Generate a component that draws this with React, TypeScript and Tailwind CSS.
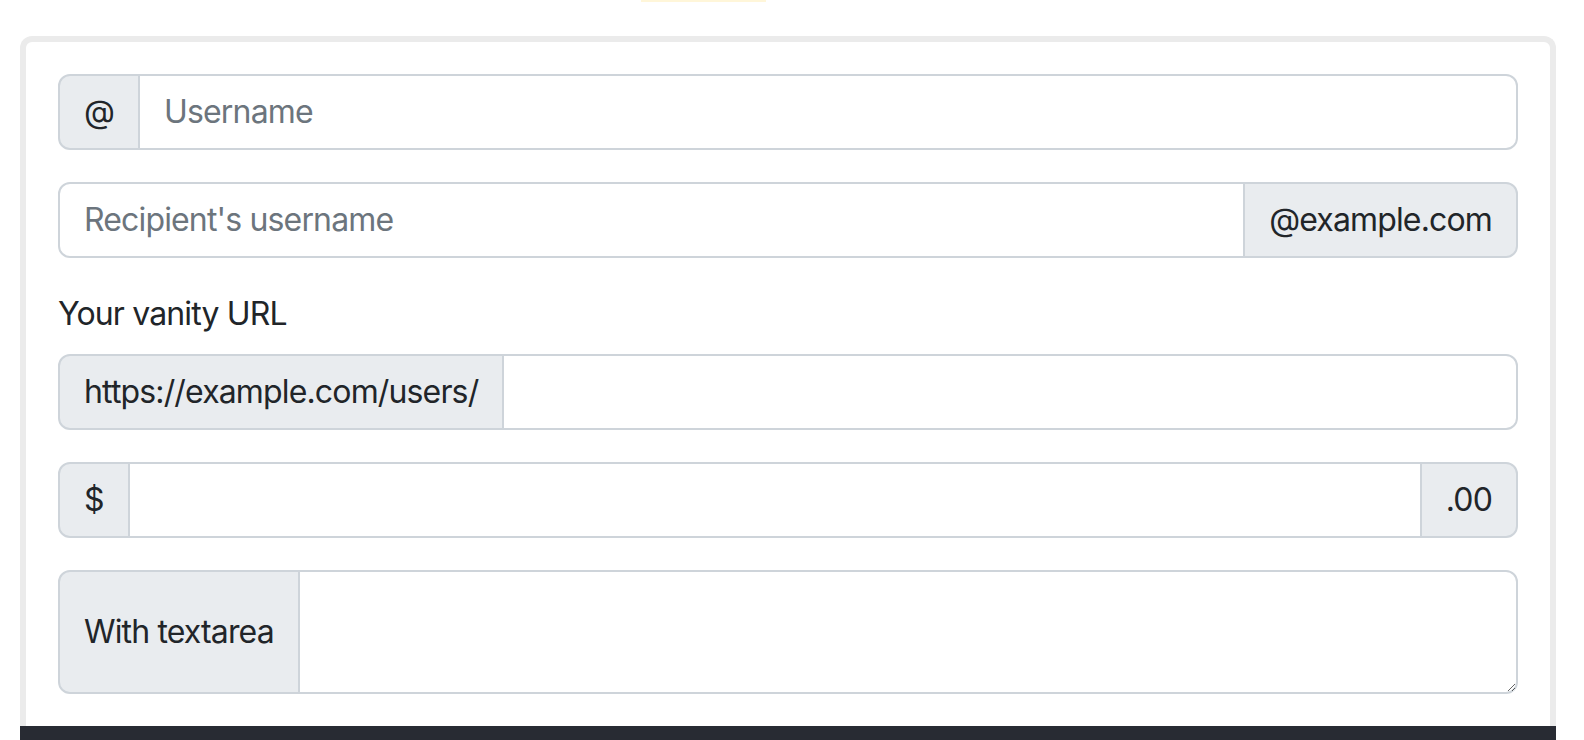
import React from "react";

const addon =
  "flex items-center whitespace-nowrap bg-[#e9ecef] border-[2px] border-[#ced4da] px-[24px] text-[32px] leading-[48px] tracking-[-0.85px] text-[#212529]";
const input =
  "flex-1 min-w-0 bg-white border-[2px] border-[#ced4da] px-[24px] py-[12px] text-[32px] leading-[48px] tracking-[-0.85px] text-[#212529] placeholder:text-[#6c757d] outline-none";

export default function App() {
  return (
    <div className="w-[1584px] h-[740px] overflow-hidden bg-white font-['Inter','Liberation_Sans',sans-serif]">
      <div className="ml-[641px] h-[2px] w-[125px] bg-[#fff6d9]" />
      <div className="ml-[20px] mt-[34px] w-[1536px] border-[6px] border-b-0 border-[#ebebeb] rounded-t-[12px] p-[32px]">
        <div className="flex mb-[32px]">
          <span className={addon + " rounded-l-[12px]"}>@</span>
          <input className={input + " -ml-[2px] rounded-r-[12px]"} placeholder="Username" />
        </div>
        <div className="flex mb-[32px]">
          <input className={input + " rounded-l-[12px]"} placeholder="Recipient's username" />
          <span className={addon + " -ml-[2px] rounded-r-[12px]"}>@example.com</span>
        </div>
        <label className="block text-[32px] leading-[48px] tracking-[-0.85px] text-[#212529] mb-[16px]">Your vanity URL</label>
        <div className="flex mb-[32px]">
          <span className={addon + " rounded-l-[12px]"}>https://example.com/users/</span>
          <input className={input + " -ml-[2px] rounded-r-[12px]"} />
        </div>
        <div className="flex mb-[32px]">
          <span className={addon + " rounded-l-[12px]"}>$</span>
          <input className={input + " -ml-[2px]"} />
          <span className={addon + " -ml-[2px] rounded-r-[12px]"}>.00</span>
        </div>
        <div className="flex">
          <span className={addon + " rounded-l-[12px]"}>With textarea</span>
          <textarea className={input + " -ml-[2px] rounded-r-[12px] h-[124px] block"} />
        </div>
      </div>
      <div className="ml-[20px] w-[1536px] h-[14px] bg-[#282b33]" />
    </div>
  );
}
